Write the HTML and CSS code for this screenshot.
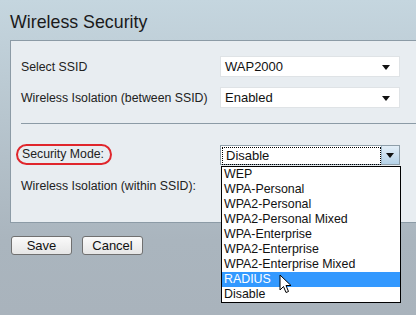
FILE: index.html
```html
<!DOCTYPE html>
<html lang="en">
<head>
    <meta charset="UTF-8">
    <title>Wireless Security</title>
    <link rel="stylesheet" href="styles.css">
</head>
<body>
    <h1 class="title">Wireless Security</h1>

    <div class="panel">
        <div class="row">
            <label>Select SSID</label>
            <div class="select">WAP2000<span class="arrow"></span></div>
        </div>
        <div class="row">
            <label>Wireless Isolation (between SSID)</label>
            <div class="select">Enabled<span class="arrow"></span></div>
        </div>

        <hr class="divider">

        <div class="row">
            <label class="circled">Security Mode:</label>
            <div class="select open">
                <span class="focus">Disable</span>
                <span class="drop-btn"><span class="arrow"></span></span>
                <!-- open option list -->
                <ul class="options">
                    <li>WEP</li>
                    <li>WPA-Personal</li>
                    <li>WPA2-Personal</li>
                    <li>WPA2-Personal Mixed</li>
                    <li>WPA-Enterprise</li>
                    <li>WPA2-Enterprise</li>
                    <li>WPA2-Enterprise Mixed</li>
                    <li class="hover">RADIUS</li>
                    <li>Disable</li>
                </ul>
                <svg class="cursor" width="14" height="20" viewBox="0 0 14 20">
                    <path d="M1 1 L1 16 L4.5 12.5 L7 18.5 L9.5 17.5 L7 11.5 L12 11.5 Z" fill="#fff" stroke="#000" stroke-width="1" stroke-linejoin="round"/>
                </svg>
            </div>
        </div>
        <div class="row">
            <label>Wireless Isolation (within SSID):</label>
        </div>
    </div>

    <div class="buttons">
        <button>Save</button>
        <button>Cancel</button>
    </div>
</body>
</html>
```

FILE: styles.css
```css
body {
    margin: 0;
    height: 315px;
    overflow: hidden;
    font-family: Arial, "Liberation Sans", sans-serif;
    font-size: 12.3px;
    color: #222;
    background: linear-gradient(to bottom, #c5d6df 0px, #b7c5ce 120px, #aab5be 240px, #a9b3bc 315px);
}
.title {
    margin: 0;
    padding: 12px 0 0 10px;
    height: 40px;
    box-sizing: border-box;
    font-size: 17.8px;
    font-weight: normal;
    color: #1a1a1a;
}
.panel {
    margin-left: 10px;
    height: 183px;
    box-sizing: border-box;
    border: 1px solid #8c9ba6;
    border-right: none;
    background: #e8edf1;
    padding: 15px 0 0 10px;
}
.row {
    display: grid;
    grid-template-columns: 199px 180px;
    align-items: center;
    height: 21px;
    margin-bottom: 10px;
}
.row label {
    color: #222;
}
.select {
    position: relative;
    height: 21px;
    box-sizing: border-box;
    background: #fff;
    border: 1px solid #dfe3e6;
    padding: 2px 0 0 4px;
    font-size: 13px;
    color: #111;
}
.arrow {
    position: absolute;
    right: 9px;
    top: 8px;
    width: 0;
    height: 0;
    border-left: 4px solid transparent;
    border-right: 4px solid transparent;
    border-top: 5px solid #111;
}
.divider {
    border: none;
    border-top: 1px solid #8c9ba6;
    margin: 15px 0 20px 0;
}
.circled {
    justify-self: start;
    margin-left: -5px;
    padding: 1px 6px 2px 4px;
    border: 2px solid #e0262c;
    border-radius: 12px;
}
.select.open {
    height: 20px;
    border: 1px solid #8e9ea9;
    padding: 1px;
}
.focus {
    display: block;
    height: 16px;
    margin-right: 17px;
    padding-left: 3px;
    line-height: 16px;
    border: 1px dotted #000;
}
.drop-btn {
    position: absolute;
    right: 0;
    top: 0;
    width: 17px;
    height: 18px;
    background: linear-gradient(to bottom, #e3eef7, #b5d2e8);
    border-left: 1px solid #9fb8cb;
}
.drop-btn .arrow {
    right: 5px;
    top: 7px;
}
.options {
    position: absolute;
    left: 0;
    top: 20px;
    width: 178px;
    margin: 0;
    padding: 0;
    list-style: none;
    background: #fff;
    border: 1px solid #000;
    z-index: 5;
}
.options li {
    height: 15px;
    line-height: 15px;
    padding-left: 2px;
    font-size: 12.4px;
    color: #111;
}
.options li.hover {
    background: #3399ff;
    color: #fff;
}
.cursor {
    position: absolute;
    left: 58px;
    top: 128px;
    z-index: 6;
}
.buttons {
    display: flex;
    gap: 10px;
    padding: 13px 0 0 11px;
}
.buttons button {
    width: 61px;
    height: 19px;
    padding: 0;
    font-family: Arial, "Liberation Sans", sans-serif;
    font-size: 13px;
    color: #111;
    background: linear-gradient(to bottom, #fafafa, #e6e6e6);
    border: 1px solid #707070;
    border-radius: 3px;
}
```
